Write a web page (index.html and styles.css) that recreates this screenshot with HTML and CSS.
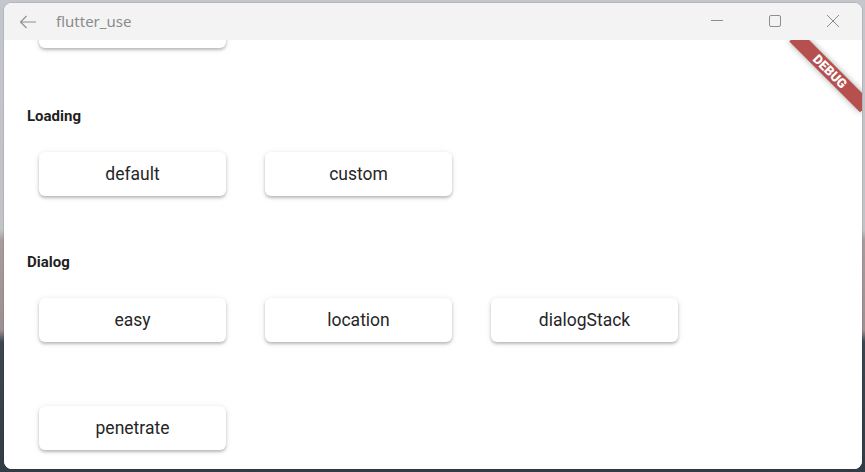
FILE: index.html
```html
<!DOCTYPE html>
<html lang="en">
<head>
<meta charset="utf-8">
<title>flutter_use</title>
<link rel="stylesheet" href="styles.css">
</head>
<body>
<div class="desktop">
  <div class="window">
    <div class="titlebar">
      <div class="back">
        <svg width="18" height="14" viewBox="0 0 18 14"><path d="M17 7H1.5M7.5 1L1.5 7L7.5 13" fill="none" stroke="#8e8e8e" stroke-width="1.1"/></svg>
      </div>
      <div class="title">flutter_use</div>
      <div class="captions">
        <div class="cap"><svg width="14" height="14" viewBox="0 0 14 14"><path d="M1 6.5H13" stroke="#8e8e8e" stroke-width="1"/></svg></div>
        <div class="cap"><svg width="14" height="14" viewBox="0 0 14 14"><rect x="1.5" y="1.5" width="11" height="11" rx="1.5" fill="none" stroke="#8e8e8e" stroke-width="1"/></svg></div>
        <div class="cap"><svg width="14" height="14" viewBox="0 0 14 14"><path d="M1 1L13 13M13 1L1 13" stroke="#8e8e8e" stroke-width="1"/></svg></div>
      </div>
    </div>
    <div class="content">
      <div class="scroll">
        <div class="wrap wrap-top">
          <div class="btn"></div>
        </div>
        <div class="section-title">Loading</div>
        <div class="wrap">
          <div class="btn">default</div>
          <div class="btn">custom</div>
        </div>
        <div class="section-title">Dialog</div>
        <div class="wrap">
          <div class="btn">easy</div>
          <div class="btn">location</div>
          <div class="btn">dialogStack</div>
          <div class="btn">penetrate</div>
        </div>
      </div>
      <div class="banner">DEBUG</div>
    </div>
  </div>
</div>
</body>
</html>
```
FILE: styles.css
```css
html, body {
  margin: 0;
  padding: 0;
}
body {
  width: 865px;
  height: 472px;
  overflow: hidden;
  background: linear-gradient(180deg, #c3c6cb 0px, #c2c3c7 230px, #a99c9d 240px, #9d9091 330px, #3c4550 342px, #333c46 472px);
  font-family: Roboto, "Noto Sans", sans-serif;
}
.desktop {
  height: 472px;
  box-sizing: border-box;
  padding: 3px 3px 3px 4px;
  display: flex;
}
.window {
  flex: 1;
  display: flex;
  flex-direction: column;
  border-radius: 8px;
  overflow: hidden;
  background: #ffffff;
  box-shadow: 0 0 0 1px rgba(0, 0, 0, 0.08);
}
.titlebar {
  height: 37px;
  flex: none;
  background: #f3f3f3;
  display: flex;
  align-items: center;
}
.back {
  width: 48px;
  height: 37px;
  display: flex;
  align-items: center;
  justify-content: center;
}
.title {
  padding-left: 4px;
  font-family: "Noto Sans", "Open Sans", sans-serif;
  font-size: 15px;
  color: #8b8b8b;
  line-height: 20px;
  margin-top: -2px;
}
.captions {
  margin-left: auto;
  display: flex;
  height: 37px;
}
.cap {
  width: 58px;
  height: 37px;
  display: flex;
  align-items: center;
  justify-content: center;
  margin-top: -1px;
}
.content {
  flex: 1;
  position: relative;
  overflow: hidden;
  background: #ffffff;
}
.scroll {
  margin-top: -36px;
  padding-left: 23px;
}
.wrap-top {
  padding-bottom: 2px;
}
.section-title {
  margin-top: 56px;
  margin-bottom: 26px;
  font-size: 15px;
  font-weight: 700;
  line-height: 20px;
  color: #1f1f1f;
}
.wrap {
  padding-left: 12px;
  display: flex;
  flex-wrap: wrap;
  column-gap: 39px;
  row-gap: 64px;
}
.btn {
  width: 187px;
  height: 44px;
  border-radius: 6px;
  background: #ffffff;
  box-shadow: 0 2px 3px rgba(0, 0, 0, 0.22), 0 1px 6px rgba(0, 0, 0, 0.1);
  display: flex;
  align-items: center;
  justify-content: center;
  font-size: 17.5px;
  color: #262626;
}
.banner {
  position: absolute;
  top: 24px;
  right: -18px;
  width: 100px;
  height: 15px;
  transform: rotate(45deg);
  background: #b5504f;
  color: #ffffff;
  font-family: Roboto, "Noto Sans", sans-serif;
  font-size: 13px;
  font-weight: 900;
  line-height: 15px;
  text-align: center;
  box-shadow: 0 0 6px rgba(0, 0, 0, 0.35);
}
```
